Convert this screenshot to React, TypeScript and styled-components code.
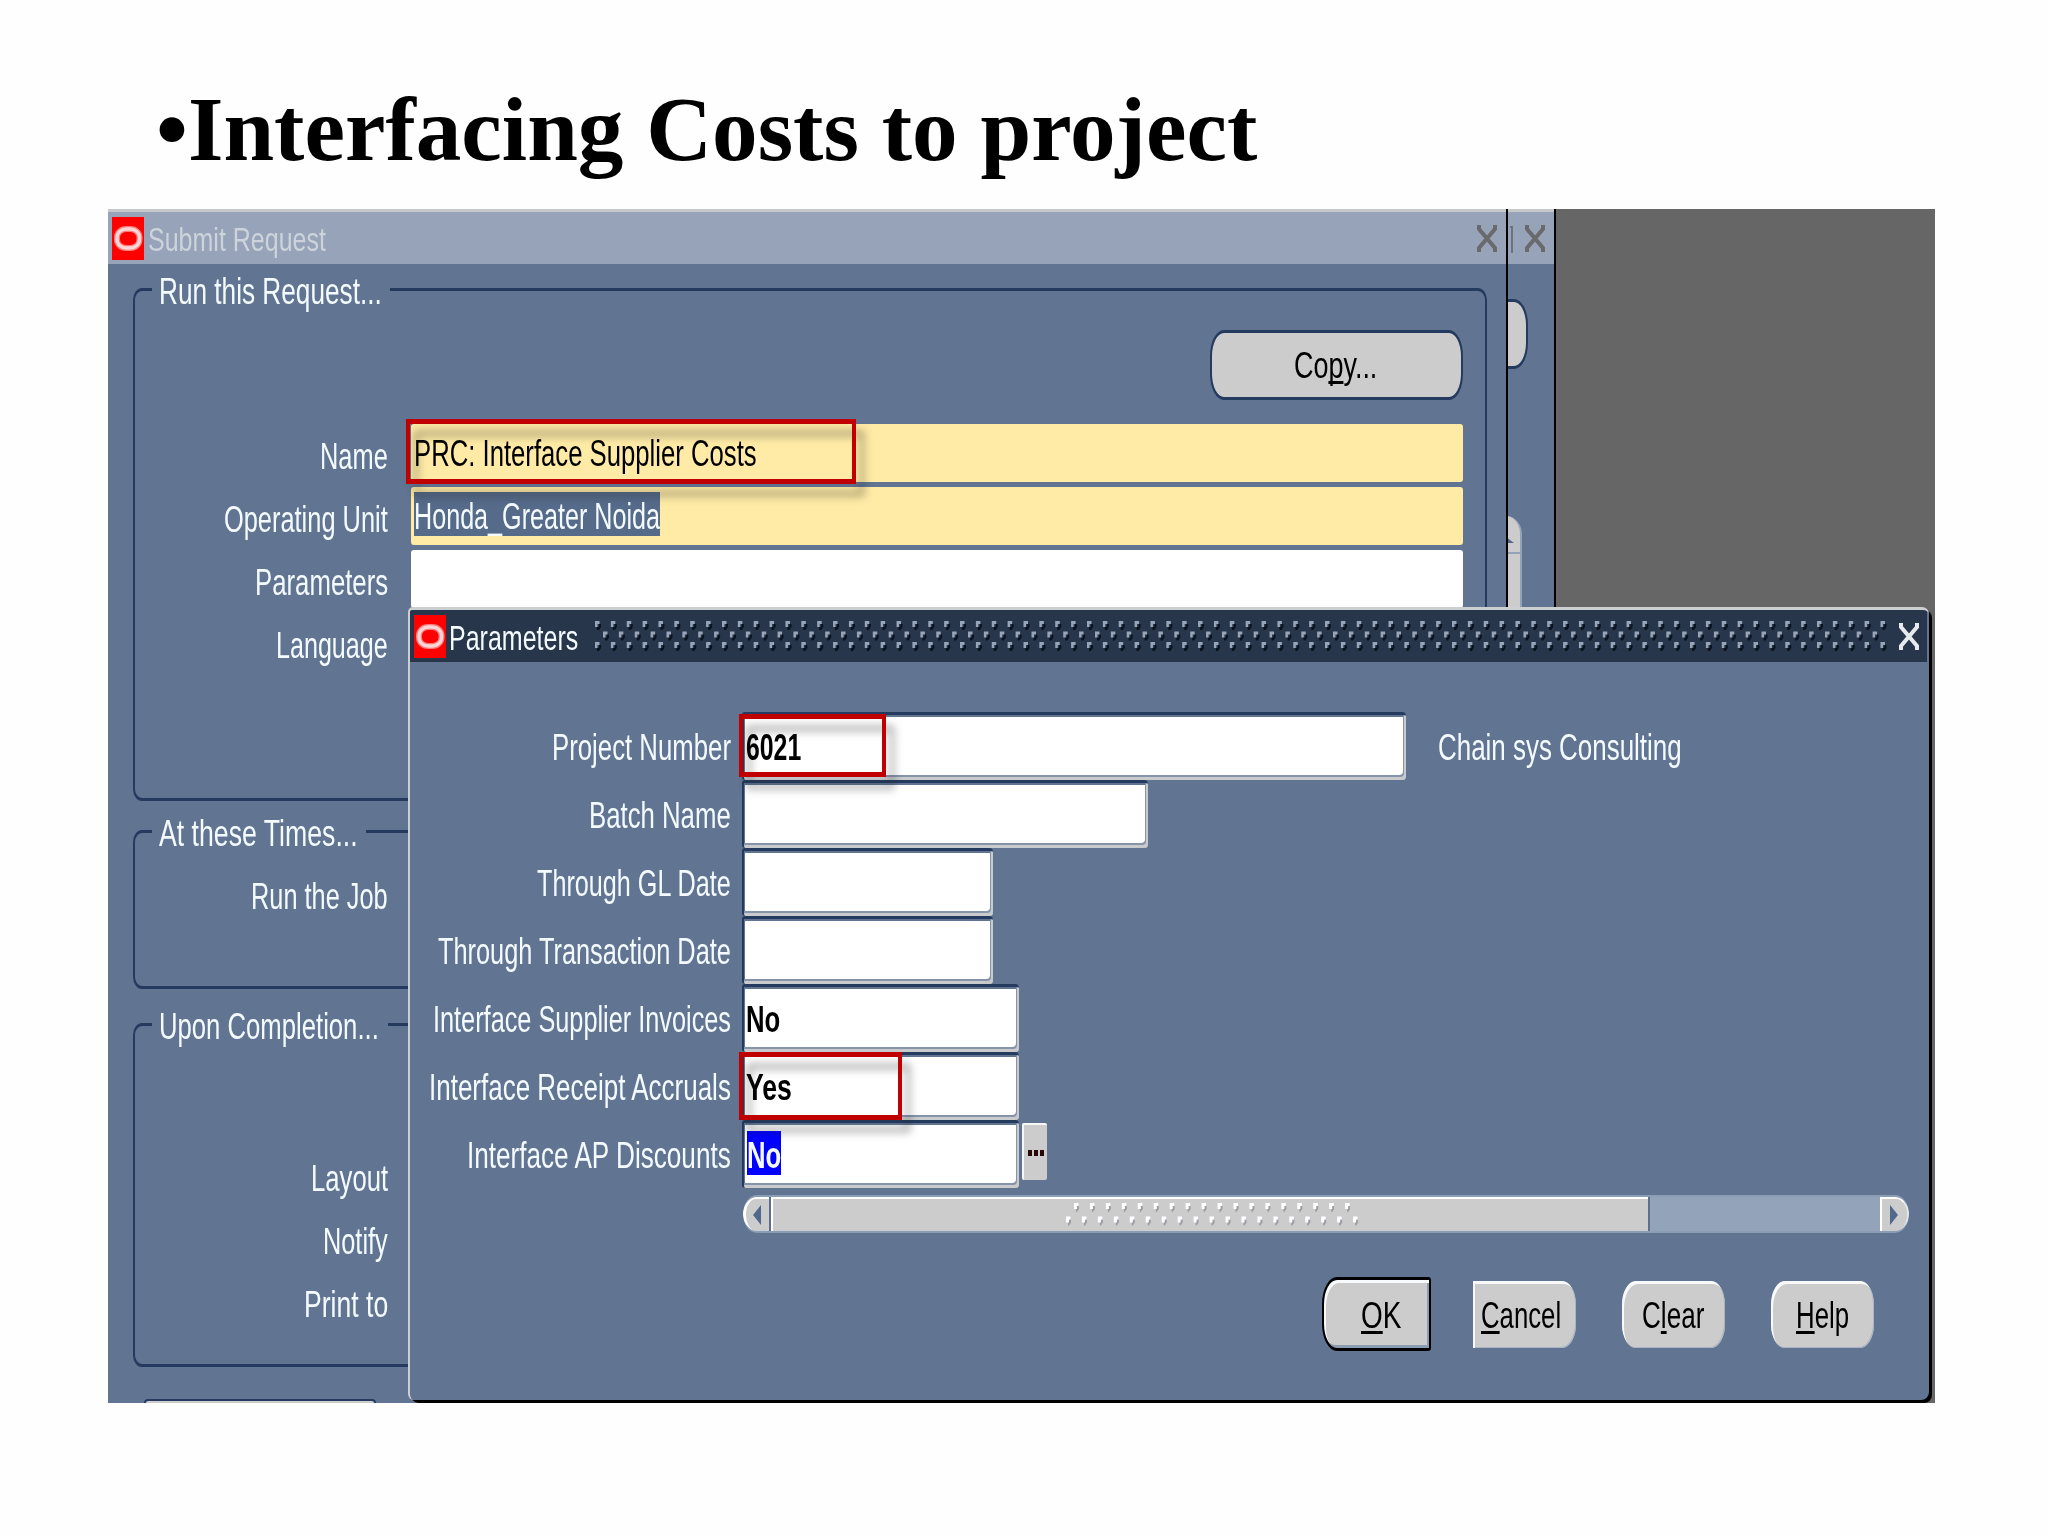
import React, { useLayoutEffect, useRef, useState } from "react";
import styled, { createGlobalStyle, css } from "styled-components";

const c = {
  body: "#617593",
  line: "#243a5e",
  title: "#96a3b9",
  dark: "#28364b",
  face: "#cccccc",
  yellow: "#ffeba6",
  red: "#c00000",
};

const Global = createGlobalStyle`
  * { box-sizing: border-box; }
  body { margin: 0; background: #fefefe; }
`;

/* ---------- condensed text ---------- */

const FitBox = styled.span<{ $w: number }>`
  display: block;
  flex: none;
  width: ${(p) => p.$w}px;
  white-space: nowrap;
`;
const FitInner = styled.span`
  display: inline-block;
  transform-origin: 0 50%;
`;

/* Condenses or widens its text so that it fills exactly w pixels. */
function Fit({ w, children }: { w: number; children: React.ReactNode }) {
  const ref = useRef<HTMLSpanElement>(null);
  const [scale, setScale] = useState(1);
  useLayoutEffect(() => {
    if (ref.current) setScale(w / ref.current.offsetWidth);
  }, [w, children]);
  return (
    <FitBox $w={w}>
      <FitInner ref={ref} style={{ transform: `scaleX(${scale})` }}>
        {children}
      </FitInner>
    </FitBox>
  );
}

/* ---------- slide ---------- */

const Slide = styled.main`
  width: 2048px;
  height: 1536px;
  overflow: hidden;
  padding: 77px 0 0 108px;
  background: #fefefe;
`;
const Heading = styled.h1`
  margin: 0 0 0 48px;
  height: 132px;
  font: bold 91.5px/104px "Liberation Serif", serif;
  color: #000;
`;
const Desktop = styled.section`
  position: relative;
  width: 1827px;
  height: 1194px;
  overflow: hidden;
  background: #666666;
  font: 37px/40px "Liberation Sans", sans-serif;
  color: #f4fbff;
`;

/* ---------- windows ---------- */

const BackWindow = styled.div`
  position: absolute;
  left: 1300px;
  top: 0;
  width: 148px;
  height: 1194px;
  background: ${c.body};
  border-right: 2px solid #000;
`;
const BackTitle = styled.div`
  height: 55px;
  display: flex;
  justify-content: flex-end;
  align-items: center;
  gap: 12px;
  padding: 0 9px 0 0;
  border-top: 3px solid #c6c8cc;
  background: ${c.title};
`;
const BackTick = styled.div`
  width: 3px;
  height: 27px;
  margin-top: 2px;
  border: solid #6c7280;
  border-width: 2px 2px 0 0;
`;
const BackButton = styled.div`
  width: 120px;
  height: 70px;
  margin-top: 35px;
  border: solid ${c.line};
  border-width: 3px 2px;
  border-radius: 14px / 26px;
  background: ${c.face};
`;
const BackScroll = styled.div`
  width: 114px;
  height: 900px;
  margin-top: 147px;
  border-right: 2px solid #93a4ba;
  border-radius: 0 16px 0 0 / 0 18px 0 0;
  background: ${c.face};
  display: flex;
  flex-direction: column;
`;
const BackScrollTop = styled.div`
  height: 38px;
  border-bottom: 2px solid #93a4ba;
  display: flex;
  justify-content: flex-end;
  align-items: center;
  padding: 8px 6px 0 0;
`;

const SubmitWindow = styled.div`
  position: absolute;
  left: 0;
  top: 0;
  width: 1400px;
  height: 1194px;
  overflow: hidden;
  border-right: 2px solid #000;
  background: ${c.body};
`;
const SubmitTitle = styled.header`
  height: 55px;
  display: flex;
  align-items: center;
  padding: 0 9px 0 4px;
  border-top: 3px solid #c6c8cc;
  background: ${c.title};
  color: #ccd3da;
  font-size: 34px;
`;
const TitleText = styled.div`
  flex: 1;
  padding: 2px 0 0 4px;
`;
const SubmitBody = styled.div`
  padding: 24px 0 0 25px;
`;
const Group = styled.section<{ $h: number; $gap: number }>`
  width: 1354px;
  height: ${(p) => p.$h}px;
  margin-bottom: ${(p) => p.$gap}px;
  border: solid ${c.line};
  border-width: 3px 2px;
  border-radius: 9px / 12px;
`;
const Legend = styled.div<{ $w: number }>`
  width: ${(p) => p.$w}px;
  height: 40px;
  margin: -20px 0 0 17px;
  padding: 1px 0 0 7px;
  background: ${c.body};
`;
const CopyRow = styled.div`
  display: flex;
  justify-content: flex-end;
  padding: 19px 22px 21px 0;
`;
const CopyButton = styled.button`
  width: 253px;
  height: 70px;
  padding: 2px 2px 0 0;
  display: flex;
  justify-content: center;
  align-items: center;
  border: solid ${c.line};
  border-width: 3px 2px;
  border-radius: 14px / 26px;
  background: ${c.face};
  color: #000;
  font: inherit;
`;
const U = styled.span`
  text-decoration: underline;
  text-decoration-thickness: 3px;
  text-underline-offset: 3px;
  text-decoration-skip-ink: none;
`;
const FormRow = styled.div`
  display: flex;
  gap: 23px;
  height: 63px;
  padding: 3px 0;
`;
const FormLabel = styled.div`
  width: 253px;
  display: flex;
  justify-content: flex-end;
  line-height: 65px;
`;
const FormField = styled.div<{ $bg: string }>`
  width: 1052px;
  height: 58px;
  padding-left: 3px;
  border-radius: 3px;
  background: ${(p) => p.$bg};
  color: #000;
  line-height: 59px;
`;
const Picked = styled.span<{ $bg: string; $w: number }>`
  display: block;
  width: ${(p) => p.$w}px;
  height: 44px;
  background: ${(p) => p.$bg};
  color: #f4fbff;
  line-height: 49px;
`;
const Pad = styled.div<{ $h: number }>`
  height: ${(p) => p.$h}px;
`;
const CutButton = styled.div`
  width: 232px;
  height: 40px;
  margin-left: 11px;
  border: solid ${c.line};
  border-width: 2px;
  border-radius: 4px;
  background: ${c.face};
`;

/* ---------- parameters dialog ---------- */

const Shade = styled.div`
  position: absolute;
  left: 303px;
  top: 401px;
  width: 1521px;
  height: 793px;
  border-radius: 8px;
  background: #000;
`;
const Dialog = styled.div`
  position: absolute;
  left: 300px;
  top: 398px;
  width: 1521px;
  height: 793px;
  overflow: hidden;
  border: solid #cccfd2;
  border-width: 3px 0 0 2px;
  border-radius: 5px 7px 8px 6px;
  background: ${c.body};
`;
const DialogTitle = styled.header`
  width: 1517px;
  height: 52px;
  display: flex;
  align-items: center;
  padding: 0 8px 0 4px;
  background: ${c.dark};
  font-size: 34.5px;
`;
const DialogName = styled.div`
  width: 149px;
  padding: 3px 0 0 3px;
`;
const CloseSlot = styled.div`
  margin-left: auto;
  display: flex;
`;
const Params = styled.div`
  padding-top: 50px;
`;
const ParamRow = styled.div`
  display: flex;
  height: 68px;
  line-height: 71px;
`;
const ParamLabel = styled.div`
  width: 321px;
  margin-right: 11px;
  display: flex;
  justify-content: flex-end;
`;
const ParamField = styled.div<{ $w: number }>`
  width: ${(p) => p.$w}px;
  height: 68px;
  border: solid ${c.line};
  border-width: 3px 0 0 2px;
  border-radius: 3px 4px 4px 3px;
  background: #fff;
  box-shadow: inset -2px -3px 0 #c8cacc, inset -3px -5px 0 #8593ab, inset 1px 2px 0 #617593;
  padding-left: 2px;
  color: #000;
  font-weight: bold;
  line-height: 65px;
`;
const LovButton = styled.div`
  width: 25px;
  height: 57px;
  margin: 3px 0 0 3px;
  display: flex;
  align-items: center;
  justify-content: center;
  gap: 2px;
  border: solid #f4f6f8;
  border-width: 2px 0 0 2px;
  border-radius: 2px;
  background: ${c.face};
`;
const LovDot = styled.i`
  width: 4px;
  height: 6px;
  background: #2a0606;
`;
const Aside = styled.div`
  margin-left: 32px;
`;
const ScrollBar = styled.div`
  display: flex;
  align-items: center;
  width: 1166px;
  height: 38px;
  margin: 7px 0 44px 333px;
  overflow: hidden;
  border: solid #8b9cb5;
  border-width: 2px 0;
  border-radius: 14px / 19px;
  background: #93a4ba;
`;
const ScrollEnd = styled.div<{ $side: "left" | "right" }>`
  width: ${(p) => (p.$side === "left" ? 26 : 29)}px;
  height: 34px;
  display: flex;
  align-items: center;
  justify-content: center;
  border-top: 2px solid #fff;
  background: ${c.face};
  ${(p) =>
    p.$side === "left"
      ? css`border-left: 3px solid #fff; border-radius: 13px 0 0 13px / 17px 0 0 17px; padding-right: 2px;`
      : css`border-left: 2px solid #fff; border-right: 2px solid #e4e8ea; border-radius: 0 13px 13px 0 / 0 17px 17px 0; padding-right: 2px;`}
`;
const Thumb = styled.div`
  width: 881px;
  height: 34px;
  margin-right: auto;
  display: flex;
  align-items: center;
  padding-left: 295px;
  border: solid #5c6f8d;
  border-width: 0 2px;
  background: ${c.face};
  box-shadow: inset 2px 2px 0 #fff;
`;
const Buttons = styled.div`
  display: flex;
  align-items: center;
  gap: 46px;
  padding-left: 912px;
`;
const Push = styled.button<{ $left: boolean; $right: boolean; $default?: boolean }>`
  width: 103px;
  height: 67px;
  padding: 3px 1px 0 0;
  display: flex;
  justify-content: center;
  align-items: center;
  border: 0;
  border-radius: ${(p) =>
    `${p.$left ? 14 : 0}px ${p.$right ? 14 : 0}px ${p.$right ? 14 : 0}px ${p.$left ? 14 : 0}px / ${p.$left ? 24 : 0}px ${p.$right ? 24 : 0}px ${p.$right ? 24 : 0}px ${p.$left ? 24 : 0}px`};
  background: ${c.face};
  box-shadow: inset 2px 3px 0 #f7f9fb, inset -1px -1px 0 #a9b4c4;
  color: #000;
  font: inherit;
  ${(p) =>
    p.$default &&
    css`
      width: 109px;
      height: 74px;
      margin-right: -4px;
      padding-left: 10px;
      border: solid #000;
      border-width: 3px 2px;
      border-radius: 15px 3px 3px 15px / 27px 3px 3px 27px;
      box-shadow: inset 2px 3px 0 #f7f9fb, inset -2px -3px 0 #8b9cb0;
    `}
`;

const RedBox = styled.div<{ $x: number; $y: number; $w: number; $h: number }>`
  position: absolute;
  left: ${(p) => p.$x}px;
  top: ${(p) => p.$y}px;
  width: ${(p) => p.$w}px;
  height: ${(p) => p.$h}px;
  border: solid ${c.red};
  border-width: 5px 4px;
  filter: drop-shadow(8px 12px 4px rgba(30, 35, 30, 0.42));
`;

/* ---------- drawings ---------- */

const Logo = () => (
  <svg width="32" height="43" viewBox="0 0 32 43">
    <rect width="32" height="43" fill="#ff0000" />
    <rect x="5" y="12" width="22.5" height="19" rx="9" ry="8.5" fill="none" stroke="#ff7a7a" strokeWidth="6" />
    <rect x="5" y="12" width="22.5" height="19" rx="9" ry="8.5" fill="none" stroke="#ffd6d6" strokeWidth="3.4" />
  </svg>
);

const Cross = ({ color }: { color: string }) => (
  <svg width="20" height="27" viewBox="0 0 20 27">
    <path d="M2 0v4L18 23v4M18 0v4L2 23v4" fill="none" stroke={color} strokeWidth="4" />
  </svg>
);

const PITCH = 15.87;
const TitleGrip = () => (
  <svg width="1294" height="30" viewBox="0 0 1294 30">
    {[0, 1, 2].map((row) =>
      Array.from({ length: row === 1 ? 81 : 82 }, (_, i) => {
        const x = i * PITCH + (row === 1 ? 8 : 0);
        const y = row * 10.5;
        return (
          <g key={`${row}-${i}`}>
            <path d={`M${x + 4} ${y + 3}h2v3l-2 3h-2v-3h2z`} fill="#0a121e" />
            <path d={`M${x} ${y}h4.5v3h-2v3h-2.5z`} fill="#98a5b8" />
          </g>
        );
      })
    )}
  </svg>
);

const ThumbGrip = () => (
  <svg width="298" height="23" viewBox="0 0 298 23">
    {[0, 1].map((row) =>
      Array.from({ length: row ? 19 : 18 }, (_, i) => {
        const x = i * 15.95 + (row ? 0 : 8);
        const y = row * 13.5;
        return (
          <g key={`${row}-${i}`}>
            <path d={`M${x + 2} ${y + 3}h3v3l-2 3h-1z`} fill="#9a9fa6" />
            <path d={`M${x} ${y}h4.5v3h-1.5v3h-3z`} fill="#fff" />
          </g>
        );
      })
    )}
  </svg>
);

const Arrow = ({ d }: { d: string }) => (
  <svg width="10" height="20" viewBox="0 0 10 20">
    <path d={d} fill="#51688c" />
  </svg>
);

/* ---------- content ---------- */

const params = [
  { label: "Project Number", lw: 179, w: 664, value: "6021", vw: 55, note: "Chain sys Consulting" },
  { label: "Batch Name", lw: 142, w: 406 },
  { label: "Through GL Date", lw: 194, w: 251 },
  { label: "Through Transaction Date", lw: 293, w: 251 },
  { label: "Interface Supplier Invoices", lw: 298, w: 277, value: "No", vw: 34 },
  { label: "Interface Receipt Accruals", lw: 302, w: 277, value: "Yes", vw: 46 },
  { label: "Interface AP Discounts", lw: 264, w: 277, value: "No", vw: 34, active: true },
];

const Label = ({ text, w }: { text: string; w: number }) => (
  <FormRow>
    <FormLabel>
      <Fit w={w}>{text}</Fit>
    </FormLabel>
  </FormRow>
);

export default function App() {
  return (
    <Slide>
      <Global />
      <Heading>
        <Fit w={1101}>•Interfacing Costs to project</Fit>
      </Heading>
      <Desktop>
        <BackWindow>
          <BackTitle>
            <BackTick />
            <Cross color="#686a6c" />
          </BackTitle>
          <BackButton />
          <BackScroll>
            <BackScrollTop>
              <svg width="12" height="9" viewBox="0 0 12 9">
                <path d="M0 9V0L12 9z" fill="#51688c" />
              </svg>
            </BackScrollTop>
          </BackScroll>
        </BackWindow>

        <SubmitWindow>
          <SubmitTitle>
            <Logo />
            <TitleText>
              <Fit w={178}>Submit Request</Fit>
            </TitleText>
            <Cross color="#686a6c" />
          </SubmitTitle>
          <SubmitBody>
            <Group $h={513} $gap={29}>
              <Legend $w={238}>
                <Fit w={223}>Run this Request...</Fit>
              </Legend>
              <CopyRow>
                <CopyButton>
                  <Fit w={83}>
                    Co<U>p</U>y...
                  </Fit>
                </CopyButton>
              </CopyRow>
              <FormRow>
                <FormLabel>
                  <Fit w={68}>Name</Fit>
                </FormLabel>
                <FormField $bg={c.yellow}>
                  <Fit w={343}>PRC: Interface Supplier Costs</Fit>
                </FormField>
              </FormRow>
              <FormRow>
                <FormLabel>
                  <Fit w={164}>Operating Unit</Fit>
                </FormLabel>
                <FormField $bg={c.yellow} style={{ paddingTop: 5 }}>
                  <Picked $bg="#566a8a" $w={246}>
                    <Fit w={246}>Honda_Greater Noida</Fit>
                  </Picked>
                </FormField>
              </FormRow>
              <FormRow>
                <FormLabel>
                  <Fit w={133}>Parameters</Fit>
                </FormLabel>
                <FormField $bg="#ffffff" />
              </FormRow>
              <Label text="Language" w={112} />
            </Group>
            <Group $h={159} $gap={34}>
              <Legend $w={214}>
                <Fit w={199}>At these Times...</Fit>
              </Legend>
              <Pad $h={8} />
              <Label text="Run the Job" w={137} />
            </Group>
            <Group $h={344} $gap={32}>
              <Legend $w={236}>
                <Fit w={220}>Upon Completion...</Fit>
              </Legend>
              <Pad $h={97} />
              <Label text="Layout" w={77} />
              <Label text="Notify" w={65} />
              <Label text="Print to" w={84} />
            </Group>
            <CutButton />
          </SubmitBody>
        </SubmitWindow>
        <RedBox $x={298} $y={210} $w={450} $h={65} />

        <Shade />
        <Dialog>
          <DialogTitle>
            <Logo />
            <DialogName>
              <Fit w={129}>Parameters</Fit>
            </DialogName>
            <TitleGrip />
            <CloseSlot>
              <Cross color="#e6eaee" />
            </CloseSlot>
          </DialogTitle>
          <Params>
            {params.map((p) => (
              <ParamRow key={p.label}>
                <ParamLabel>
                  <Fit w={p.lw}>{p.label}</Fit>
                </ParamLabel>
                <ParamField $w={p.w} style={p.active ? { paddingTop: 8 } : undefined}>
                  {p.value &&
                    (p.active ? (
                      <Picked $bg="#0000ff" $w={34} style={{ marginLeft: 1 }}>
                        <Fit w={p.vw}>{p.value}</Fit>
                      </Picked>
                    ) : (
                      <Fit w={p.vw!}>{p.value}</Fit>
                    ))}
                </ParamField>
                {p.active && (
                  <LovButton>
                    <LovDot />
                    <LovDot />
                    <LovDot />
                  </LovButton>
                )}
                {p.note && (
                  <Aside>
                    <Fit w={244}>{p.note}</Fit>
                  </Aside>
                )}
              </ParamRow>
            ))}
            <ScrollBar>
              <ScrollEnd $side="left">
                <Arrow d="M9 0V20L1 10z" />
              </ScrollEnd>
              <Thumb>
                <ThumbGrip />
              </Thumb>
              <ScrollEnd $side="right">
                <Arrow d="M1 0V20L9 10z" />
              </ScrollEnd>
            </ScrollBar>
            <Buttons>
              <Push $left $right={false} $default>
                <Fit w={40}>
                  <U>O</U>K
                </Fit>
              </Push>
              <Push $left={false} $right style={{ paddingRight: 7 }}>
                <Fit w={80}>
                  <U>C</U>ancel
                </Fit>
              </Push>
              <Push $left $right>
                <Fit w={62}>
                  C<U>l</U>ear
                </Fit>
              </Push>
              <Push $left $right>
                <Fit w={53}>
                  <U>H</U>elp
                </Fit>
              </Push>
            </Buttons>
          </Params>
        </Dialog>
        <RedBox $x={631} $y={505} $w={147} $h={63} />
        <RedBox $x={631} $y={843} $w={163} $h={68} />
      </Desktop>
    </Slide>
  );
}
